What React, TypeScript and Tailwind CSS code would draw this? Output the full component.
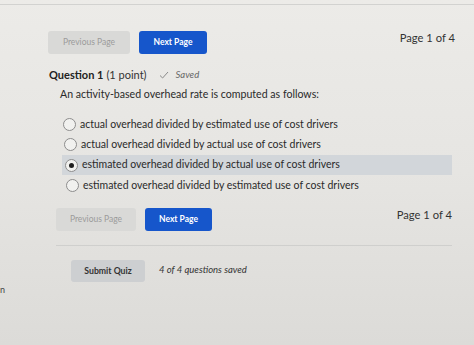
import React from "react";

const options = [
  "actual overhead divided by estimated use of cost drivers",
  "actual overhead divided by actual use of cost drivers",
  "estimated overhead divided by actual use of cost drivers",
  "estimated overhead divided by estimated use of cost drivers",
];

function Radio({ checked }: { checked: boolean }) {
  return (
    <span className="flex h-[13px] w-[13px] shrink-0 items-center justify-center rounded-full border border-[#8d8d8d] bg-[#f1f1ef]">
      {checked && <span className="h-[5px] w-[5px] rounded-full bg-[#1e1e1e]" />}
    </span>
  );
}

export default function App() {
  return (
    <div
      className="relative h-[345px] w-[474px] overflow-hidden bg-gradient-to-b from-[#ecebe8] via-[#e6e5e2] to-[#dcdbd8] text-[#2a2a2a]"
      style={{ fontFamily: "Lato, 'Open Sans', sans-serif" }}
    >
      <div className="mt-[4px] h-px w-full bg-[#d2d2d0]" />
      <div className="flex items-start pl-[48px] pr-[19px] pt-[26px]">
        <button className="h-[23px] w-[82px] rounded-[3px] bg-[#d9d9d7] text-[8.5px] text-[#9b9b9b]">
          Previous Page
        </button>
        <button className="ml-[9px] h-[23px] w-[68px] rounded-[3px] bg-[#1656cb] text-[8.5px] font-bold text-white">
          Next Page
        </button>
        <span className="ml-auto mt-[-1px] text-[11.2px] text-[#333]">Page 1 of 4</span>
      </div>

      <div className="mt-[13px] flex items-center pl-[49px] text-[11px]">
        <span className="font-bold text-[#222]">Question 1</span>
        <span className="ml-[3px] text-[#333]">(1 point)</span>
        <svg className="ml-[12px]" width="10" height="8" viewBox="0 0 10 8">
          <path d="M1 4.5 L3.6 7 L9 1" fill="none" stroke="#8a8a8a" strokeWidth="1" />
        </svg>
        <span className="ml-[7px] text-[9.5px] italic text-[#666]">Saved</span>
      </div>

      <div className="mt-[3px] pl-[60px] text-[10.6px] text-[#2a2a2a]">
        An activity-based overhead rate is computed as follows:
      </div>

      <div className="mt-[12px] flex flex-col pl-[62px] pr-[22px]">
        {options.map((o, i) => (
          <div
            key={i}
            className={`flex h-[20.3px] items-center gap-[4px] text-[10.5px] text-[#2a2a2a] ${
              i === 2 ? "bg-[#d2d6da]" : ""
            }`}
            style={{ paddingLeft: 1 + i }}
          >
            <Radio checked={i === 2} />
            <span>{o}</span>
          </div>
        ))}
      </div>

      <div className="mt-[12px] flex items-start pl-[56px] pr-[22px]">
        <button className="h-[23px] w-[80px] rounded-[3px] bg-[#d9d9d7] text-[8.5px] text-[#9b9b9b]">
          Previous Page
        </button>
        <button className="ml-[9px] h-[23px] w-[67px] rounded-[3px] bg-[#1656cb] text-[8.5px] font-bold text-white">
          Next Page
        </button>
        <span className="ml-auto mt-[-1px] text-[11.2px] text-[#333]">Page 1 of 4</span>
      </div>

      <div className="ml-[56px] mr-[22px] mt-[14px] h-px bg-[#cfcfcd]" />

      <div className="mt-[14px] flex items-center pl-[71px]">
        <button className="h-[22px] w-[74px] rounded-[3px] bg-[#cdcfd1] text-[8.7px] font-bold text-[#333]">
          Submit Quiz
        </button>
        <span className="ml-[14px] text-[9.5px] italic text-[#333]">4 of 4 questions saved</span>
      </div>

      <div className="mt-[1px] text-[9px] text-[#444]">n</div>
    </div>
  );
}
